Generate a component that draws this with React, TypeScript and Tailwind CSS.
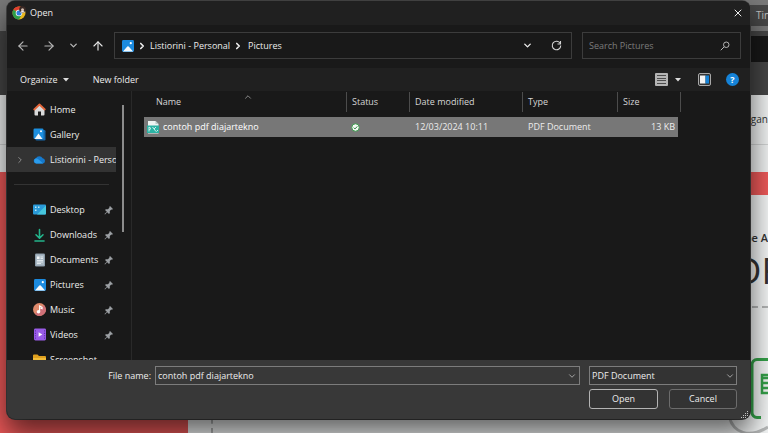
import { useState, type ReactNode } from "react";
import { ArrowLeft, ArrowRight, ArrowUp, ChevronDown, ChevronRight, ChevronUp, X } from "lucide-react";

type Place = {
  name: string;
  icon: ReactNode;
  pinned?: boolean;
};

function ChromeIcon() {
  return (
    <svg viewBox="0 0 28 28" className="size-[14px]" aria-hidden="true">
      <circle cx="14" cy="14" r="13" fill="#e8b51c" />
      <path d="M14 14 2.7 7.5A13 13 0 0 1 25.3 7.5H14Z" fill="#e0402f" />
      <path d="M14 14 2.7 7.5A13 13 0 0 0 14 27l5.6-9.8Z" fill="#2f9e4a" />
      <circle cx="14" cy="14" r="6.6" fill="#f2f2f2" />
      <circle cx="14" cy="14" r="5" fill="#2f7fe0" />
      <circle cx="21" cy="7" r="6.5" fill="#3a2a26" />
      <circle cx="21" cy="7.5" r="3" fill="#d9c3b4" />
      <path d="M16 13c1-4 9-4 10 0Z" fill="#f1ece8" />
    </svg>
  );
}

function HomeIcon() {
  return (
    <svg viewBox="0 0 26 26" className="size-[13px]" aria-hidden="true">
      <path d="M3 12 13 4l10 8v11a2 2 0 0 1-2 2h-5v-8h-6v8H5a2 2 0 0 1-2-2Z" fill="#dadada" />
      <path d="m2.500 13 10.500-10 10.500 10" fill="none" stroke="#e4663a" strokeWidth="3.6" strokeLinecap="round" strokeLinejoin="round" />
    </svg>
  );
}

function GalleryIcon() {
  return (
    <svg viewBox="0 0 26 26" className="size-[13px]" aria-hidden="true">
      <rect x="5" y="4" width="20" height="21" rx="2.5" fill="#1666a8" />
      <rect x="1" y="1" width="20" height="21" rx="2.5" fill="#1c8fe0" />
      <path d="m3 22 8-11 8 11Z" fill="#f4f8fb" />
      <circle cx="16" cy="6.5" r="2" fill="#fff" />
    </svg>
  );
}

function CloudIcon() {
  return (
    <svg viewBox="0 0 28 20" className="h-[9px] w-[13px]" aria-hidden="true">
      <path d="M7 19a6 6 0 0 1-1-11.9A8.500 8.500 0 0 1 21 7a6.200 6.200 0 0 1 1 12Z" fill="#1579cc" />
      <path d="M7 19a6 6 0 0 1-2-11c5-1 8 2 17 11Z" fill="#2b9cec" />
    </svg>
  );
}

function DesktopIcon() {
  return (
    <svg viewBox="0 0 26 22" className="h-[11px] w-[13px]" aria-hidden="true">
      <rect x="0" y="1" width="26" height="20" rx="2" fill="#2a9ad8" />
      <path d="M26 3v16a2 2 0 0 1-2 2H8Z" fill="#47c6dc" />
      <path d="M4 5h3v3H4zM4 11h3v3H4zM10 5h3v3h-3z" fill="#bfe8f6" />
    </svg>
  );
}

function DownloadIcon() {
  return (
    <svg viewBox="0 0 26 28" className="h-[14px] w-[13px]" fill="none" stroke="#23b48b" strokeWidth="3.200" strokeLinecap="round" strokeLinejoin="round" aria-hidden="true">
      <path d="M13 3v17M6 13.500l7 7 7-7" />
      <path d="M4 26h18" />
    </svg>
  );
}

function DocumentIcon() {
  return (
    <svg viewBox="0 0 24 28" className="h-[14px] w-[12px]" aria-hidden="true">
      <rect x="2" y="1" width="20" height="26" rx="2.500" fill="#8b9ba8" />
      <rect x="4" y="3" width="16" height="22" rx="1" fill="#a9b8c3" />
      <path d="M6 7h5v5H6z" fill="#f2f6f9" />
      <path d="M13 8h5M13 11h5M6 15h12M6 18h12M6 21h8" stroke="#eef3f6" strokeWidth="1.600" />
    </svg>
  );
}

function PictureIcon() {
  return (
    <svg viewBox="0 0 26 26" className="size-[12px] shrink-0" aria-hidden="true">
      <rect x="0" y="0" width="26" height="26" rx="3" fill="#1b8ade" />
      <path d="m2 25 8.500-10a3 3 0 0 1 5 0L24 25Z" fill="#f5f9fc" />
      <circle cx="19" cy="7" r="2.400" fill="#fff" />
    </svg>
  );
}

function MusicIcon() {
  return (
    <svg viewBox="0 0 26 26" className="size-[13px]" aria-hidden="true">
      <circle cx="13" cy="13" r="13" fill="#e08a6c" />
      <path d="M4 22A13 13 0 0 0 26 13L22 4Z" fill="#cf7078" />
      <circle cx="11" cy="17.500" r="3.500" fill="#fff" />
      <path d="M13.200 17.500V6l5 2.500v3l-3.200-1.500" fill="none" stroke="#fff" strokeWidth="2.200" />
    </svg>
  );
}

function VideoIcon() {
  return (
    <svg viewBox="0 0 26 28" className="h-[13px] w-[12px]" aria-hidden="true">
      <rect x="0" y="1" width="26" height="26" rx="3" fill="#9a5ce8" />
      <path d="M3 5v19M23 5v19" stroke="#5c2ba8" strokeWidth="2.200" strokeDasharray="2.600 2.600" />
      <path d="m10 9 8 5-8 5Z" fill="#fff" />
    </svg>
  );
}

function FolderIcon() {
  return (
    <svg viewBox="0 0 26 22" className="h-[11px] w-[13px]" aria-hidden="true">
      <path d="M0 3a2 2 0 0 1 2-2h7l3 3h12a2 2 0 0 1 2 2v13a2 2 0 0 1-2 2H2a2 2 0 0 1-2-2Z" fill="#e0a01e" />
      <path d="M0 8h26v11a2 2 0 0 1-2 2H2a2 2 0 0 1-2-2Z" fill="#f2bd3a" />
    </svg>
  );
}

function PinIcon() {
  return (
    <svg viewBox="0 0 20 20" className="size-[10px] shrink-0" aria-hidden="true">
      <path d="m12 2 6 6-2 1.500-1.500-.3-3 3 .2 4-1.700 1.800-3.700-3.700L2 19l-1-1 4.700-4.300L2 10l1.800-1.700 4 .2 3-3L10.500 4Z" fill="#9b9fa3" />
    </svg>
  );
}

function PdfFileIcon() {
  return (
    <svg viewBox="0 0 24 26" className="h-[13px] w-[12px] shrink-0" aria-hidden="true">
      <path d="M2 0h15l6 6v19H2Z" fill="#eef3f2" />
      <path d="M17 0v6h6Z" fill="#b9c7c5" />
      <path d="M0 9h24v15H0Z" fill="#2bb3a4" />
      <path d="M4 21v-9l4 3-4 3M11 12l7 9M18 12l-4 4M19 21l3-3" fill="none" stroke="#dff7f4" strokeWidth="1.800" />
    </svg>
  );
}

function SyncedIcon() {
  return (
    <svg viewBox="0 0 18 18" className="size-[9px]" aria-hidden="true">
      <circle cx="9" cy="9" r="7.500" fill="#f4faf4" stroke="#3a9a4c" strokeWidth="2" />
      <path d="m5.500 9.200 2.500 2.600 4.600-5" fill="none" stroke="#2c7d3c" strokeWidth="2" />
    </svg>
  );
}

function RefreshIcon() {
  return (
    <svg viewBox="0 0 22 22" className="size-[11px]" fill="none" stroke="#d4d4d4" strokeWidth="2.200" aria-hidden="true">
      <path d="M18.500 7A8.500 8.500 0 1 0 19.500 11" />
      <path d="M19 2v6h-6" />
    </svg>
  );
}

function SearchIcon() {
  return (
    <svg viewBox="0 0 20 20" className="size-[10px] shrink-0" fill="none" stroke="#b5b5b5" strokeWidth="2" aria-hidden="true">
      <circle cx="12.500" cy="7.500" r="5.500" />
      <path d="M8.500 11.500 1.500 18.500" />
    </svg>
  );
}

function ListViewIcon() {
  return (
    <svg viewBox="0 0 13 13" className="size-[13px]" aria-hidden="true">
      <rect x="0" y="0" width="13" height="13" rx="1" fill="#b4b4b4" />
      <path d="M2 2h9v1H2zM2 5h9v1H2zM2 7h9v1H2zM2 10h9v1H2z" fill="#4c4c4c" />
    </svg>
  );
}

function PreviewPaneIcon() {
  return (
    <svg viewBox="0 0 26 26" className="size-[13px]" aria-hidden="true">
      <rect x="1" y="1" width="24" height="24" rx="3" fill="#333" stroke="#a8a8a8" strokeWidth="2" />
      <path d="M4 5h11v16H4Z" fill="#f4f4f4" />
      <path d="M15 5h7v16h-7Z" fill="#1583d8" />
    </svg>
  );
}

function CaretDown() {
  return (
    <svg viewBox="0 0 12 8" className="h-[4px] w-[6px]" aria-hidden="true">
      <path d="M0 0h12L6 7Z" fill="#dcdcdc" />
    </svg>
  );
}

function ResizeGrip() {
  return (
    <svg viewBox="0 0 8 8" className="size-[8px]" fill="#c4c4c4" aria-hidden="true">
      <path d="M6 0h1v1H6zM4 2h1v1H4zM6 2h1v1H6zM2 4h1v1H2zM4 4h1v1H4zM6 4h1v1H6zM0 6h1v1H0zM2 6h1v1H2zM4 6h1v1H4zM6 6h1v1H6z" />
    </svg>
  );
}

const topPlaces: Place[] = [
  { name: "Home", icon: <HomeIcon /> },
  { name: "Gallery", icon: <GalleryIcon /> },
  { name: "Listiorini - Personal", icon: <CloudIcon /> },
];

const pinnedPlaces: Place[] = [
  { name: "Desktop", icon: <DesktopIcon />, pinned: true },
  { name: "Downloads", icon: <DownloadIcon />, pinned: true },
  { name: "Documents", icon: <DocumentIcon />, pinned: true },
  { name: "Pictures", icon: <PictureIcon />, pinned: true },
  { name: "Music", icon: <MusicIcon />, pinned: true },
  { name: "Videos", icon: <VideoIcon />, pinned: true },
  { name: "Screenshot", icon: <FolderIcon /> },
];

const columns = ["Name", "Status", "Date modified", "Type", "Size"];

function PlaceRow({ place, active, onSelect }: { place: Place; active: boolean; onSelect: () => void }) {
  return (
    <li>
      <button
        type="button"
        onClick={onSelect}
        className={["flex h-[25px] w-full items-center overflow-hidden pl-2", active ? "bg-[#333333]" : ""].join(" ")}
      >
        <span className="w-[18px] shrink-0">
          {active ? <ChevronRight className="size-[10px] text-[#9a9a9a]" aria-hidden="true" /> : null}
        </span>
        <span className="flex w-[13px] shrink-0 justify-center">{place.icon}</span>
        <span className="ml-1 flex-1 overflow-hidden text-left whitespace-nowrap">{place.name}</span>
        {place.pinned ? (
          <span className="mr-[2px]">
            <PinIcon />
          </span>
        ) : null}
      </button>
    </li>
  );
}

function PageBehind() {
  return (
    <div className="flex min-h-screen flex-col bg-[#f2f4f4] font-['Open_Sans',sans-serif] text-[#333]">
      <div className="flex h-[31px] justify-end bg-[#7a7a7a] py-[5px]">
        <div className="flex w-[30px] items-center bg-[#484848] pl-[18px] text-[10px] whitespace-nowrap text-[#c4c4c4]">Tin</div>
      </div>
      <div className="h-[64px] bg-[#464646] pt-[5px]">
        <div className="ml-auto h-[26px] w-1/2 bg-[#181818]" />
      </div>
      <div className="flex h-[50px] items-center justify-end overflow-hidden border-b border-[#d3d5d5] text-[10px]">dengan</div>
      <div className="h-[27px]" />
      <div className="flex flex-1 flex-col bg-[#f05a5a] pt-[23px] pl-[188px]">
        <div className="flex flex-1 flex-col overflow-hidden bg-[#f6f8f8] pt-[34px] pl-[23px]">
          <p className="text-right text-[11px] leading-[18px] font-semibold">Adobe A</p>
          <p className="-mr-3 text-right text-[36px] leading-[48px] font-medium">PDF</p>
          <div className="mt-[11px] flex flex-1 items-start justify-end border-t-2 border-l-2 border-dashed border-[#b4b6b6] pt-[50px]">
            <svg viewBox="0 0 40 76" className="h-[76px] w-[40px]" fill="none" aria-hidden="true">
              <path d="M1 58c4 17 20 23 39 11" stroke="#b9bbbb" strokeWidth="3" />
              <path d="M42 1.500H29a5 5 0 0 0-5 5v48a5 5 0 0 0 5 5h4" stroke="#35a34a" strokeWidth="3" />
              <path d="M44 17H34v18h10M34 20h10M34 25h10M34 30h10" stroke="#35a34a" strokeWidth="2.500" />
            </svg>
          </div>
        </div>
      </div>
    </div>
  );
}

export default function App() {
  const [activePlace, setActivePlace] = useState("Listiorini - Personal");
  const [fileName, setFileName] = useState("contoh pdf diajartekno");

  return (
    <main className="relative min-h-screen overflow-hidden">
      <PageBehind />

      <section
        role="dialog"
        aria-labelledby="dialog-title"
        className="absolute top-px right-[18px] bottom-[15px] left-[7px] flex flex-col overflow-hidden rounded-lg bg-[#191919] font-['Open_Sans',sans-serif] text-[9px] leading-[14px] text-[#ececec] shadow-[0_14px_28px_2px_rgba(0,0,0,0.6),0_0_0_1px_#484848]"
      >
        <header className="flex h-6 shrink-0 items-center justify-between bg-[#202020] pr-[6px] pl-[5px]">
          <div className="flex items-center gap-1">
            <ChromeIcon />
            <h1 id="dialog-title">Open</h1>
          </div>
          <button type="button" aria-label="Close">
            <X className="size-[12px]" />
          </button>
        </header>

        <div className="flex h-[43px] shrink-0 items-center px-[9px] pb-[2px]">
          <nav className="flex w-[98px] shrink-0 items-center gap-3 text-[#b4b4b4]">
            <button type="button" aria-label="Back">
              <ArrowLeft className="size-[14px]" />
            </button>
            <button type="button" aria-label="Forward">
              <ArrowRight className="size-[14px]" />
            </button>
            <button type="button" aria-label="Recent locations">
              <ChevronDown className="size-[11px]" strokeWidth={3} />
            </button>
            <button type="button" aria-label="Up" className="text-[#e4e4e4]">
              <ArrowUp className="size-[14px]" />
            </button>
          </nav>
          <div className="flex h-[27px] min-w-0 flex-1 items-center border border-[#3c3c3c] pr-[9px] pl-[7px]">
            <PictureIcon />
            <ChevronRight className="ml-[3px] size-[10px]" strokeWidth={4} aria-hidden="true" />
            <button type="button" className="ml-[3px] whitespace-nowrap">Listiorini - Personal</button>
            <ChevronRight className="ml-[3px] size-[10px]" strokeWidth={4} aria-hidden="true" />
            <button type="button" className="ml-[5px]">Pictures</button>
            <button type="button" aria-label="Previous locations" className="mr-[18px] ml-auto">
              <ChevronDown className="size-[11px]" strokeWidth={3} />
            </button>
            <button type="button" aria-label="Refresh">
              <RefreshIcon />
            </button>
          </div>
          <label className="ml-[10px] flex h-[27px] w-[159px] items-center border border-[#3c3c3c] pr-[10px] pl-[6px]">
            <input
              type="search"
              aria-label="Search Pictures"
              placeholder="Search Pictures"
              className="min-w-0 flex-1 bg-transparent outline-none placeholder:text-[#7c7c7c]"
            />
            <SearchIcon />
          </label>
        </div>

        <div className="flex h-[23px] shrink-0 items-center bg-[#202020] pr-[11px] pl-[13px]">
          <button type="button" className="flex items-center gap-[5px]">
            Organize
            <CaretDown />
          </button>
          <button type="button" className="ml-6">New folder</button>
          <button type="button" aria-label="List view" className="ml-auto">
            <ListViewIcon />
          </button>
          <button type="button" aria-label="More view options" className="ml-[7px]">
            <CaretDown />
          </button>
          <button type="button" aria-label="Preview pane" className="ml-[17px]">
            <PreviewPaneIcon />
          </button>
          <button
            type="button"
            aria-label="Help"
            className="ml-[15px] flex size-[13px] items-center justify-center rounded-full bg-[#1583d8] font-bold text-white"
          >
            ?
          </button>
        </div>

        <div className="flex min-h-0 flex-1">
          <aside className="flex w-[125px] shrink-0 overflow-hidden border-r border-[#292929]">
            <div className="w-[109px] shrink-0 pt-[6px]">
              <ul>
                {topPlaces.map((place) => (
                  <PlaceRow
                    key={place.name}
                    place={place}
                    active={activePlace === place.name}
                    onSelect={() => setActivePlace(place.name)}
                  />
                ))}
              </ul>
              <hr className="mx-[7px] my-3 border-[#333333]" />
              <ul>
                {pinnedPlaces.map((place) => (
                  <PlaceRow
                    key={place.name}
                    place={place}
                    active={activePlace === place.name}
                    onSelect={() => setActivePlace(place.name)}
                  />
                ))}
              </ul>
            </div>
            <div className="mt-[14px] ml-[6px] h-[127px] w-[2px] bg-[#8c8c8c]" />
          </aside>

          <div className="min-w-0 flex-1 overflow-hidden pl-3">
            <table className="w-[537px] table-fixed border-collapse text-left">
              <colgroup>
                <col className="w-[203px]" />
                <col className="w-[63px]" />
                <col className="w-[113px]" />
                <col className="w-[95px]" />
                <col className="w-[60px]" />
                <col className="w-[3px]" />
              </colgroup>
              <thead>
                <tr>
                  {columns.map((column) => (
                    <th key={column} scope="col" className="p-0 pt-px pb-[5px] font-normal text-[#d6d6d6]">
                      <div
                        className={[
                          "flex h-5 items-center",
                          column === "Name" ? "pl-3" : "pl-[5px]",
                          column === "Size" ? "" : "border-r border-[#4c4c4c]",
                        ].join(" ")}
                      >
                        {column}
                        {column === "Name" ? (
                          <ChevronUp className="ml-[62px] size-[10px] self-start text-[#9c9c9c]" aria-label="Sorted ascending" />
                        ) : null}
                      </div>
                    </th>
                  ))}
                  <td className="p-0 pt-px pb-[5px]">
                    <div className="h-5 border-r border-[#4c4c4c]" />
                  </td>
                </tr>
              </thead>
              <tbody>
                <tr className="h-5 text-[#ececec]">
                  <td className="bg-[#777777] p-0">
                    <div className="flex items-center gap-1 pl-[3px] text-white">
                      <PdfFileIcon />
                      contoh pdf diajartekno
                    </div>
                  </td>
                  <td className="bg-[#777777] p-0 pl-1">
                    <SyncedIcon />
                  </td>
                  <td className="bg-[#777777] p-0 pl-[5px]">12/03/2024 10:11</td>
                  <td className="bg-[#777777] p-0 pl-[5px]">PDF Document</td>
                  <td className="bg-[#777777] p-0 pr-[3px] text-right">13 KB</td>
                </tr>
              </tbody>
            </table>
          </div>
        </div>

        <footer className="flex h-[59px] shrink-0 flex-col bg-[#383838] pt-[6px] pr-[13px]">
          <div className="flex items-center">
            <label htmlFor="file-name" className="w-[148px] shrink-0 pr-1 text-right">File name:</label>
            <div className="flex h-[19px] min-w-0 flex-1 items-center border border-[#7c7c7c] px-[2px]">
              <input
                id="file-name"
                value={fileName}
                onChange={(event) => setFileName(event.target.value)}
                className="min-w-0 flex-1 bg-transparent outline-none"
              />
              <ChevronDown className="size-[10px] text-[#b8b8b8]" aria-hidden="true" />
            </div>
            <div className="ml-[9px] grid w-[148px] items-center">
              <select
                aria-label="File type"
                className="col-start-1 row-start-1 h-[19px] appearance-none border border-[#7c7c7c] bg-[#333333] pl-[2px]"
              >
                <option>PDF Document</option>
              </select>
              <ChevronDown
                className="pointer-events-none col-start-1 row-start-1 mr-[2px] size-[10px] justify-self-end text-[#b8b8b8]"
                aria-hidden="true"
              />
            </div>
          </div>
          <div className="mt-1 flex justify-end gap-[11px]">
            <button type="button" className="h-5 w-[69px] rounded-[3px] border border-[#b4b4b4] bg-[#333333]">Open</button>
            <button type="button" className="h-5 w-[68px] rounded-[3px] border border-[#6c6c6c] bg-[#333333]">Cancel</button>
          </div>
          <div className="-mr-[12px] flex flex-1 items-end justify-end">
            <ResizeGrip />
          </div>
        </footer>
      </section>
    </main>
  );
}
